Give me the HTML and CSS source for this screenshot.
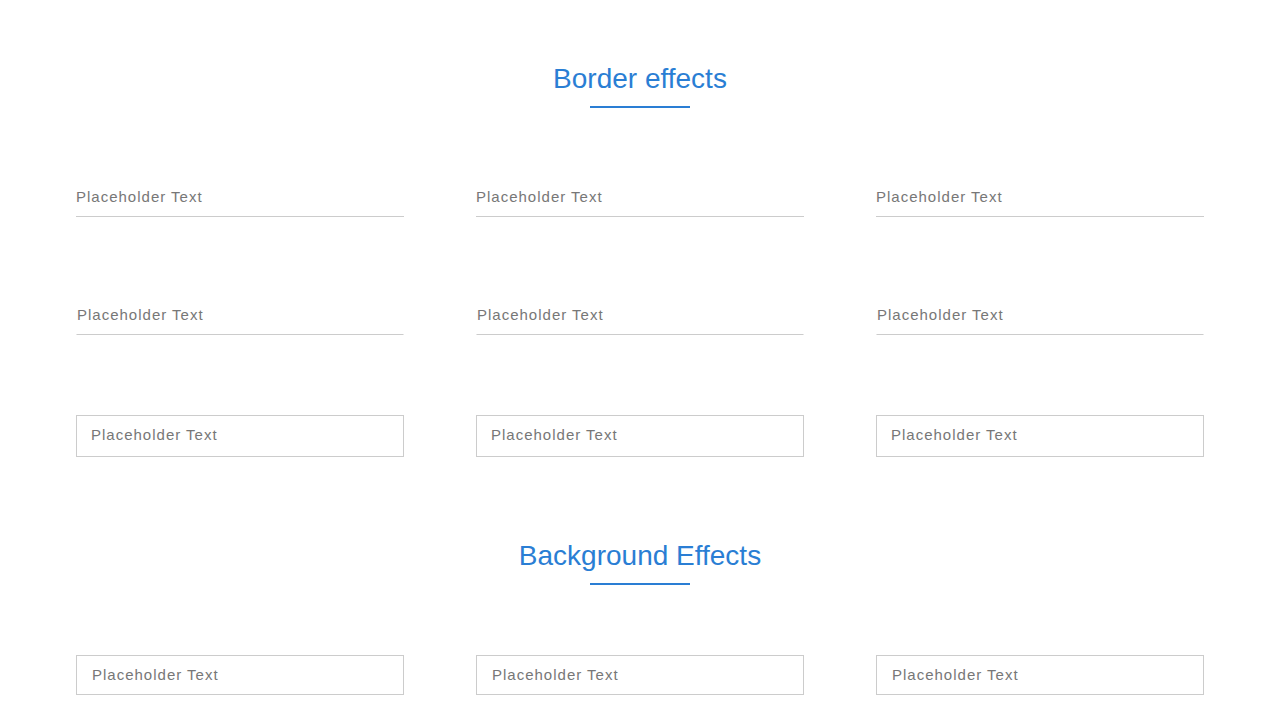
FILE: index.html
```html
<!DOCTYPE html>
<html lang="en">
<head>
  <meta charset="UTF-8">
  <title>Input Effects</title>
  <link rel="stylesheet" href="styles.css">
</head>
<body>
  <main class="wrap">
    <h2 class="section-title">Border effects</h2>
    <div class="grid">
      <div class="col"><input class="effect-line" type="text" placeholder="Placeholder Text"></div>
      <div class="col"><input class="effect-line" type="text" placeholder="Placeholder Text"></div>
      <div class="col"><input class="effect-line" type="text" placeholder="Placeholder Text"></div>

      <div class="col"><input class="effect-grow" type="text" placeholder="Placeholder Text"></div>
      <div class="col"><input class="effect-grow" type="text" placeholder="Placeholder Text"></div>
      <div class="col"><input class="effect-grow" type="text" placeholder="Placeholder Text"></div>

      <div class="col"><input class="effect-box" type="text" placeholder="Placeholder Text"></div>
      <div class="col"><input class="effect-box" type="text" placeholder="Placeholder Text"></div>
      <div class="col"><input class="effect-box" type="text" placeholder="Placeholder Text"></div>
    </div>

    <h2 class="section-title">Background Effects</h2>
    <div class="grid">
      <div class="col"><input class="effect-bg" type="text" placeholder="Placeholder Text"></div>
      <div class="col"><input class="effect-bg" type="text" placeholder="Placeholder Text"></div>
      <div class="col"><input class="effect-bg" type="text" placeholder="Placeholder Text"></div>
    </div>
  </main>
</body>
</html>
```

FILE: styles.css
```css
body {
  margin: 0;
  font-family: 'Liberation Sans', Arial, sans-serif;
  background: #fff;
}

.wrap {
  width: 1200px;
  margin: 0 auto;
  padding-top: 20px;
}

.section-title {
  margin: 42px 0 30px;
  font-size: 28px;
  line-height: 34px;
  font-weight: normal;
  color: #2a7ed4;
  text-align: center;
}

.section-title::after {
  content: "";
  display: block;
  width: 100px;
  height: 2px;
  margin: 10px auto 0;
  background: #2a7ed4;
}

.grid {
  display: grid;
  grid-template-columns: repeat(3, 1fr);
}

.col {
  padding: 40px 36px;
}

input[type="text"] {
  display: block;
  width: 100%;
  box-sizing: border-box;
  margin: 0;
  font: 15px/24px 'Liberation Sans', Arial, sans-serif;
  letter-spacing: 1px;
  color: #333;
  background: transparent;
  outline: none;
}

input::placeholder {
  color: #777;
}

.effect-line {
  border: 0;
  padding: 7px 0;
  border-bottom: 1px solid #ccc;
}

.effect-grow {
  padding: 5px 0 7px;
  border: 1px solid transparent;
  border-bottom-color: #ccc;
}

.effect-box {
  border: 1px solid #ccc;
  padding: 7px 14px 9px;
}

.effect-bg {
  border: 1px solid #ccc;
  padding: 7px 15px;
}
```
